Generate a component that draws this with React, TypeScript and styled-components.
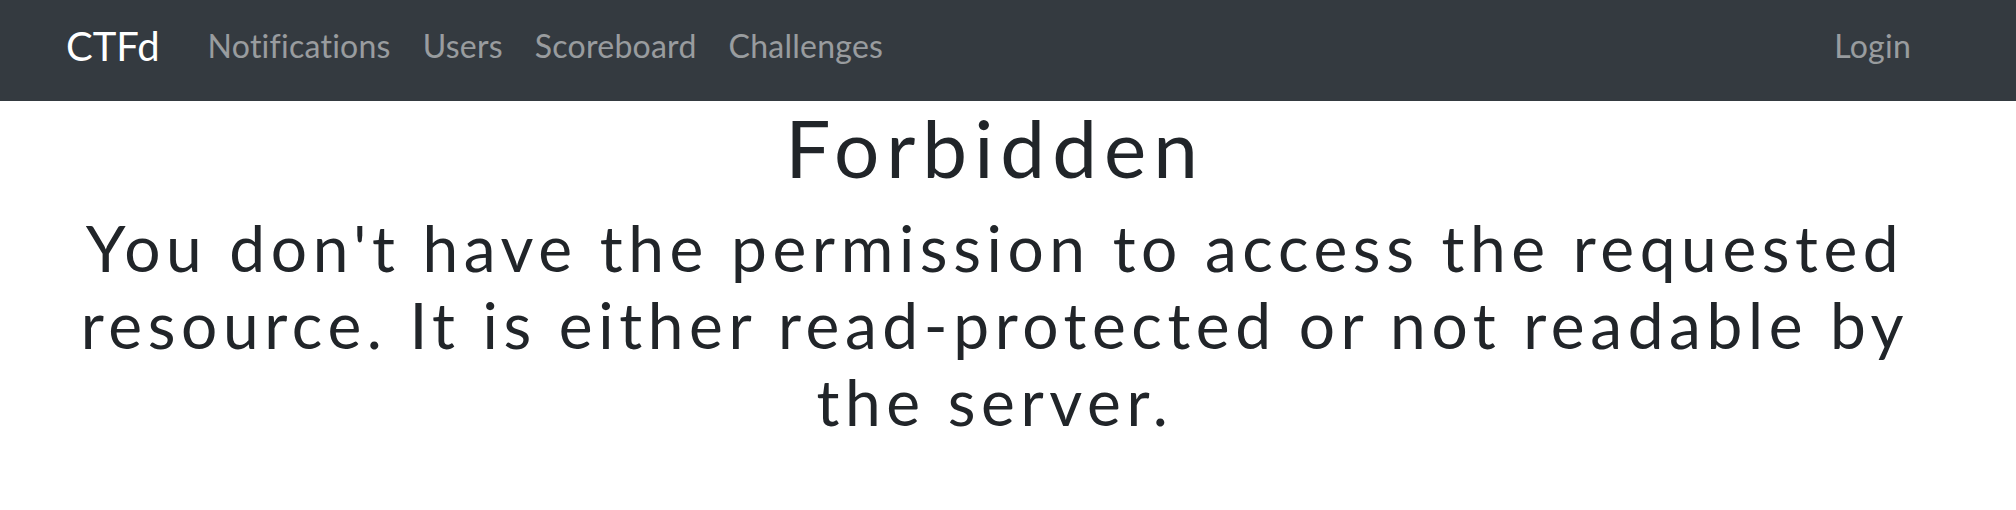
import React from "react";
import styled, { createGlobalStyle } from "styled-components";

const Global = createGlobalStyle`
  html, body { margin: 0; padding: 0; background: #ffffff; }
  body { font-family: "Lato", "Noto Sans", sans-serif; color: #212529; }
`;

const NavBar = styled.nav`
  height: 101px;
  background: #343a40;
  display: flex;
  align-items: center;
  padding: 0 89px 10px 66px;
  box-sizing: border-box;
`;

const Brand = styled.a`
  font-family: "Lato", sans-serif;
  font-size: 40px;
  color: #ffffff;
  text-decoration: none;
  margin-right: 32px;
  line-height: 1;
`;

const NavList = styled.div<{ $right?: boolean }>`
  display: flex;
  align-items: center;
  margin-left: ${(p) => (p.$right ? "auto" : "0")};
`;

const NavLink = styled.a`
  font-family: "Lato", sans-serif;
  font-size: 32px;
  letter-spacing: 0.25px;
  color: rgba(255, 255, 255, 0.5);
  text-decoration: none;
  padding: 0 16px;
  line-height: 1;
`;

const Main = styled.main`
  padding: 0 88px 0 62px;
  text-align: center;
`;

const Title = styled.h1`
  margin: 0;
  font-family: "Lato", sans-serif;
  font-weight: 400;
  font-size: 80px;
  line-height: 92px;
  letter-spacing: 7px;
`;

const Message = styled.h2`
  margin: 17px 0 0;
  font-family: "Lato", sans-serif;
  font-weight: 400;
  font-size: 64px;
  line-height: 76.8px;
  letter-spacing: 5.6px;
`;

export default function App() {
  return (
    <>
      <Global />
      <NavBar>
        <Brand href="#">CTFd</Brand>
        <NavList>
          <NavLink href="#">Notifications</NavLink>
          <NavLink href="#">Users</NavLink>
          <NavLink href="#">Scoreboard</NavLink>
          <NavLink href="#">Challenges</NavLink>
        </NavList>
        <NavList $right>
          <NavLink href="#">Login</NavLink>
        </NavList>
      </NavBar>
      <Main>
        <Title>Forbidden</Title>
        <Message>
          You don't have the permission to access the requested resource. It is
          either read-protected or not readable by the server.
        </Message>
      </Main>
    </>
  );
}
